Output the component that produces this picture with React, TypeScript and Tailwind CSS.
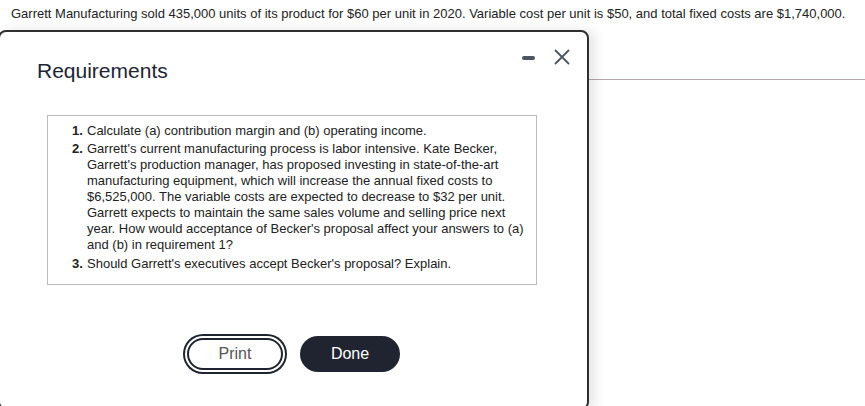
import React from "react";

export default function App() {
  return (
    <div
      className="relative w-[865px] h-[406px] overflow-hidden bg-white text-[#222]"
      style={{ fontFamily: '"Liberation Sans", Arial, sans-serif' }}
    >
      <div className="pl-[11px] pt-[6px] text-[13px] leading-[16px] text-[#222]">
        Garrett Manufacturing sold 435,000 units of its product for $60 per unit in 2020. Variable cost per unit is $50, and total fixed costs are $1,740,000.
      </div>
      <div className="mt-[57px] h-px bg-[#b9a6ad]" />

      <div className="absolute left-[-2px] top-[30px] w-[591px] h-[380px] rounded-lg border-2 border-[#303030] bg-white shadow-[6px_0_12px_rgba(0,0,0,0.10)]">
        <div className="flex justify-end items-center gap-[19px] pr-[17px] pt-[15px] h-[34px]">
          <div className="w-[13px] h-[4px] rounded-[2px] bg-[#4b5563] mt-[3px]" />
          <svg width="16" height="16" viewBox="0 0 16 16" className="text-[#4b5563]">
            <path d="M1.5 1.5 L14.5 14.5 M14.5 1.5 L1.5 14.5" stroke="currentColor" strokeWidth="1.8" strokeLinecap="round" fill="none" />
          </svg>
        </div>
        <h2 className="pl-[37px] mt-[-9px] text-[21px] leading-[28px] text-[#1c2535] font-normal">
          Requirements
        </h2>
        <div className="ml-[47px] mt-[30px] w-[490px] h-[170px] border border-[#bcbcbc] pl-[24px] pr-[10px] pt-[7px] text-[13px] leading-[16px] text-[#222]">
          <div className="flex">
            <span className="w-[15px] shrink-0 font-bold">1.</span>
            <span>Calculate (a) contribution margin and (b) operating income.</span>
          </div>
          <div className="flex mt-[2px]">
            <span className="w-[15px] shrink-0 font-bold">2.</span>
            <span>
              Garrett's current manufacturing process is labor intensive. Kate Becker, Garrett's production manager, has proposed investing in state-of-the-art manufacturing equipment, which will increase the annual fixed costs to $6,525,000. The variable costs are expected to decrease to $32 per unit. Garrett expects to maintain the same sales volume and selling price next year. How would acceptance of Becker's proposal affect your answers to (a) and (b) in requirement 1?
            </span>
          </div>
          <div className="flex mt-[3px]">
            <span className="w-[15px] shrink-0 font-bold">3.</span>
            <span>Should Garrett's executives accept Becker's proposal? Explain.</span>
          </div>
        </div>
        <div className="flex justify-center items-center gap-[17px] mt-[51px]">
          <button className="w-[96px] h-[32px] rounded-full border-2 border-[#1f2430] ring-2 ring-[#1f2430] ring-offset-2 ring-offset-white text-[16px] text-[#555] bg-white">
            Print
          </button>
          <button className="w-[100px] h-[36px] rounded-full bg-[#1f2430] text-[16px] text-white">
            Done
          </button>
        </div>
      </div>
    </div>
  );
}
